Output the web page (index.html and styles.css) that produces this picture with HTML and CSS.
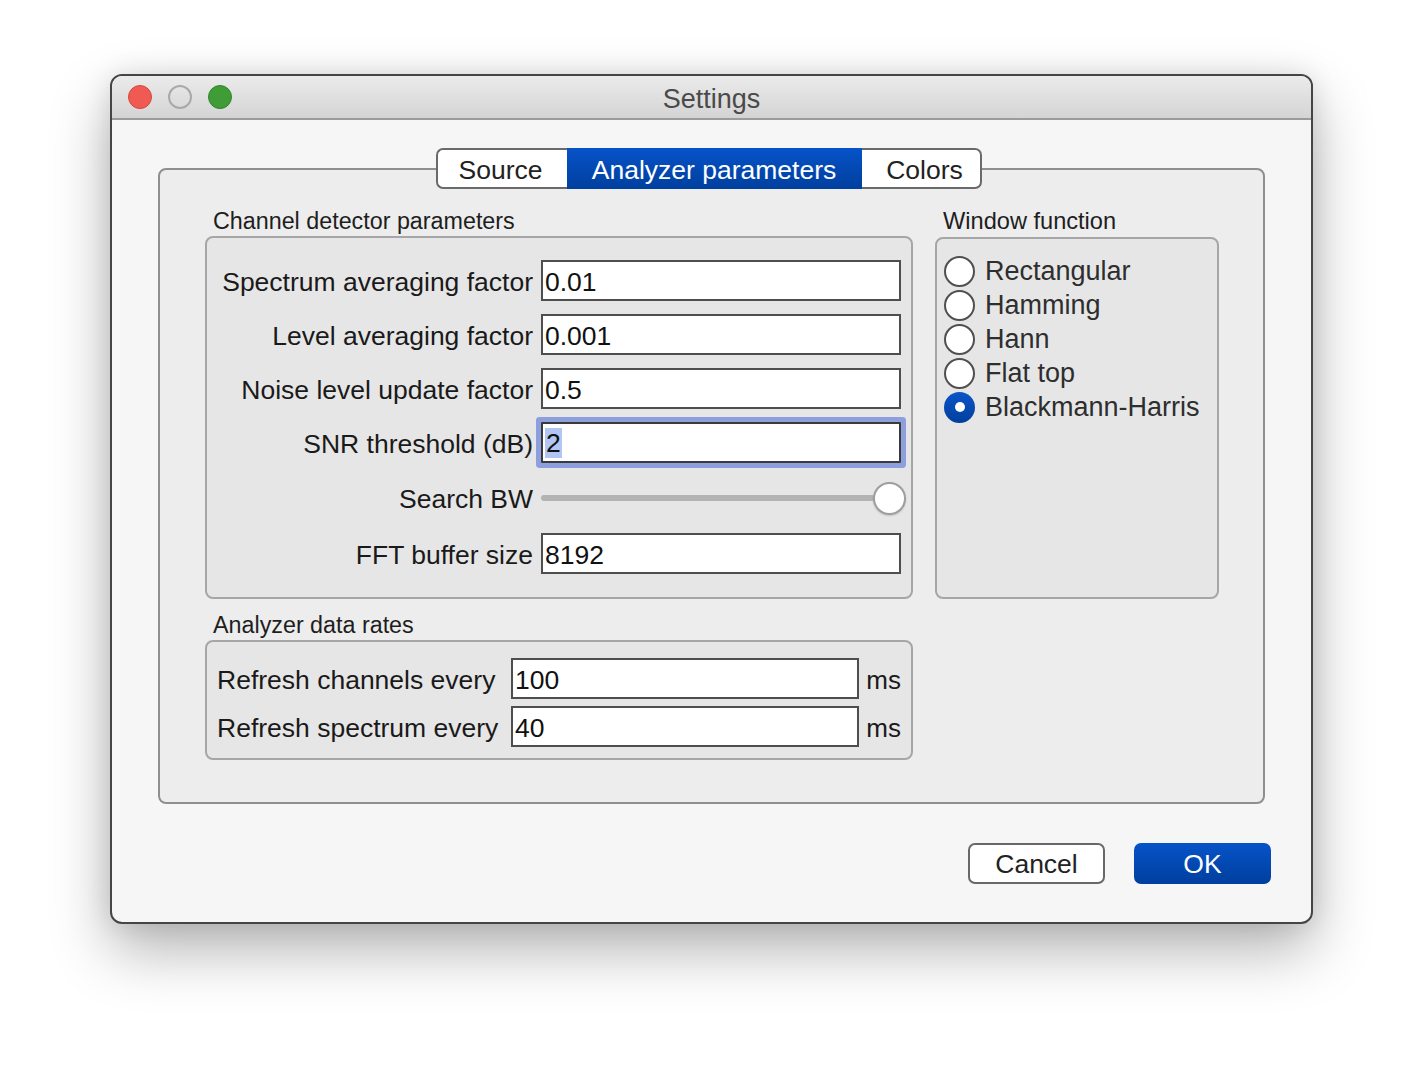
FILE: index.html
```html
<!DOCTYPE html>
<html>
<head>
<meta charset="utf-8">
<title>Settings</title>
<link rel="stylesheet" href="styles.css">
</head>
<body>
<div class="window">
  <div class="titlebar">
    <div class="lights">
      <span class="light red"></span>
      <span class="light gray"></span>
      <span class="light green"></span>
    </div>
    <div class="title">Settings</div>
    <div></div>
  </div>
  <div class="content">
    <div class="tabbar">
      <div class="tab tab-first">Source</div>
      <div class="tab tab-active">Analyzer parameters</div>
      <div class="tab tab-last">Colors</div>
    </div>
    <div class="pane">
      <div class="group group-detector">
        <div class="group-title">Channel detector parameters</div>
        <div class="box form">
          <div class="label">Spectrum averaging factor</div>
          <div class="field">0.01</div>
          <div class="label">Level averaging factor</div>
          <div class="field">0.001</div>
          <div class="label">Noise level update factor</div>
          <div class="field">0.5</div>
          <div class="label">SNR threshold (dB)</div>
          <div class="field focused"><span class="sel">2</span></div>
          <div class="label">Search BW</div>
          <div class="slider"><div class="track"></div><div class="knob"></div></div>
          <div class="label">FFT buffer size</div>
          <div class="field">8192</div>
        </div>
      </div>
      <div class="group group-window">
        <div class="group-title">Window function</div>
        <div class="box radios">
          <div class="radio-row"><span class="radio"></span><span class="radio-label">Rectangular</span></div>
          <div class="radio-row"><span class="radio"></span><span class="radio-label">Hamming</span></div>
          <div class="radio-row"><span class="radio"></span><span class="radio-label">Hann</span></div>
          <div class="radio-row"><span class="radio"></span><span class="radio-label">Flat top</span></div>
          <div class="radio-row"><span class="radio checked"></span><span class="radio-label">Blackmann-Harris</span></div>
        </div>
      </div>
      <div class="group group-rates">
        <div class="group-title">Analyzer data rates</div>
        <div class="box rates">
          <div class="label left">Refresh channels every</div>
          <div class="field">100</div>
          <div class="unit">ms</div>
          <div class="label left">Refresh spectrum every</div>
          <div class="field">40</div>
          <div class="unit">ms</div>
        </div>
      </div>
    </div>
    <div class="buttons">
      <div class="button">Cancel</div>
      <div class="button default">OK</div>
    </div>
  </div>
</div>
</body>
</html>
```

FILE: styles.css
```css
html, body {
  margin: 0;
  padding: 0;
  background: #ffffff;
}

body {
  min-height: 1072px;
  box-sizing: border-box;
  padding: 74px 0 0 110px;
  font-family: "Liberation Sans", Arial, sans-serif;
  color: #1c1c1c;
}

.window {
  width: 1203px;
  box-sizing: border-box;
  border: 2px solid #454545;
  border-radius: 12px;
  background: #f6f6f6;
  overflow: hidden;
  box-shadow: 0 26px 60px rgba(0, 0, 0, 0.30), 0 0 26px rgba(0, 0, 0, 0.10);
}

.titlebar {
  height: 42px;
  display: grid;
  grid-template-columns: 1fr auto 1fr;
  align-items: center;
  background: linear-gradient(#ebebeb, #d4d4d4);
  border-bottom: 2px solid #9b9b9b;
}

.lights {
  display: flex;
  gap: 16px;
  padding-left: 16px;
}

.light {
  width: 24px;
  height: 24px;
  border-radius: 50%;
  box-sizing: border-box;
}

.light.red {
  background: #ef5a52;
  border: 1px solid #d6473f;
}

.light.gray {
  border: 2px solid #a9a9a9;
}

.light.green {
  background: #3f9c36;
  border: 1px solid #2f872a;
}

.title {
  font-size: 27px;
  color: #4a4a4a;
  line-height: 30px;
  padding-top: 3px;
}

.content {
  padding: 28px 0 38px;
}

.tabbar {
  position: relative;
  z-index: 1;
  display: flex;
  justify-content: center;
  height: 41px;
  margin-right: 6px;
}

.tab {
  height: 41px;
  box-sizing: border-box;
  display: flex;
  align-items: center;
  justify-content: center;
  padding-top: 3px;
  font-size: 26.5px;
  color: #222;
  background: #ffffff;
  border-top: 2px solid #6a6a6a;
  border-bottom: 2px solid #6a6a6a;
}

.tab-first {
  width: 131px;
  padding-right: 3px;
  border-left: 2px solid #6a6a6a;
  border-radius: 7px 0 0 7px;
}

.tab-active {
  width: 295px;
  border: none;
  color: #ffffff;
  background: linear-gradient(#0653c8, #003f9e);
}

.tab-last {
  width: 120px;
  padding-left: 8px;
  border-right: 2px solid #6a6a6a;
  border-radius: 0 7px 7px 0;
}

.pane {
  margin: -21px 46px 0;
  border: 2px solid #8f8f8f;
  border-radius: 8px;
  background: #ededed;
  padding: 38px 44px 42px 45px;
  display: grid;
  grid-template-columns: 708px 284px;
  column-gap: 22px;
  row-gap: 13px;
  align-items: stretch;
}

.group {
  display: flex;
  flex-direction: column;
}

.group-detector {
  grid-column: 1;
  grid-row: 1;
}

.group-window {
  grid-column: 2;
  grid-row: 1;
}

.group-rates {
  grid-column: 1;
  grid-row: 2;
}

.group-title {
  font-size: 23.3px;
  line-height: 26px;
  height: 26px;
  padding-left: 8px;
  margin-bottom: 2px;
  color: #1e1e1e;
}

.group-window .group-title {
  font-size: 23.6px;
  margin-bottom: 3px;
}

.group-rates .group-title {
  margin-bottom: 2px;
}

.box {
  flex: 1;
  border: 2px solid #a6a6a6;
  border-radius: 8px;
  background: #e6e6e6;
}

.form {
  display: grid;
  grid-template-columns: 316px 1fr;
  column-gap: 8px;
  row-gap: 13px;
  padding: 22px 10px 23px 10px;
  align-items: center;
}

.label {
  font-size: 26.5px;
  line-height: 30px;
  padding-top: 2px;
  text-align: right;
  white-space: nowrap;
  color: #1a1a1a;
}

.label.left {
  text-align: left;
}

.field {
  height: 41px;
  box-sizing: border-box;
  border: 2px solid #4e4e4e;
  background: #ffffff;
  font-size: 26.5px;
  line-height: 41px;
  padding: 0 2px;
  color: #111;
}

.field.focused {
  border-color: #3a3a3a;
  box-shadow: 0 0 0 5px #8e9fdd;
  border-radius: 1px;
}

.sel {
  background: #b3c6f3;
  display: inline-block;
  line-height: 30px;
  vertical-align: 1px;
  padding: 0 1px;
}

.slider {
  height: 44px;
  display: flex;
  align-items: center;
  margin-right: -5px;
}

.track {
  flex: 1;
  height: 6px;
  border-radius: 3px;
  background: #b3b3b3;
}

.knob {
  width: 33px;
  height: 33px;
  box-sizing: border-box;
  border-radius: 50%;
  background: #ffffff;
  border: 2px solid #9e9e9e;
  margin-left: -2px;
  box-shadow: 0 1px 2px rgba(0, 0, 0, 0.15);
}

.radios {
  padding: 15px 7px;
  display: flex;
  flex-direction: column;
}

.radio-row {
  height: 34px;
  display: flex;
  align-items: center;
  gap: 10px;
}

.radio {
  width: 31px;
  height: 31px;
  box-sizing: border-box;
  border-radius: 50%;
  border: 2px solid #4f4f4f;
  background: #ffffff;
  display: flex;
  align-items: center;
  justify-content: center;
}

.radio.checked {
  border: none;
  background: linear-gradient(#0a55c8, #003f9e);
}

.radio.checked::after {
  content: "";
  width: 10px;
  height: 10px;
  border-radius: 50%;
  background: #ffffff;
}

.radio-label {
  font-size: 27px;
  color: #2e2e2e;
}

.rates {
  display: grid;
  grid-template-columns: 286px 1fr auto;
  column-gap: 8px;
  row-gap: 7px;
  padding: 16px 10px 11px 10px;
  align-items: center;
}

.unit {
  font-size: 26px;
  line-height: 30px;
  padding-top: 2px;
  color: #1a1a1a;
  margin-left: -1px;
}

.buttons {
  display: flex;
  justify-content: flex-end;
  gap: 29px;
  margin-top: 39px;
  padding-right: 40px;
}

.button {
  width: 137px;
  height: 41px;
  box-sizing: border-box;
  border: 2px solid #686868;
  border-radius: 7px;
  background: #ffffff;
  display: flex;
  align-items: center;
  justify-content: center;
  padding-top: 2px;
  font-size: 26.5px;
  color: #222;
}

.button.default {
  border: none;
  color: #ffffff;
  background: linear-gradient(#0653c8, #003f9e);
}
```
